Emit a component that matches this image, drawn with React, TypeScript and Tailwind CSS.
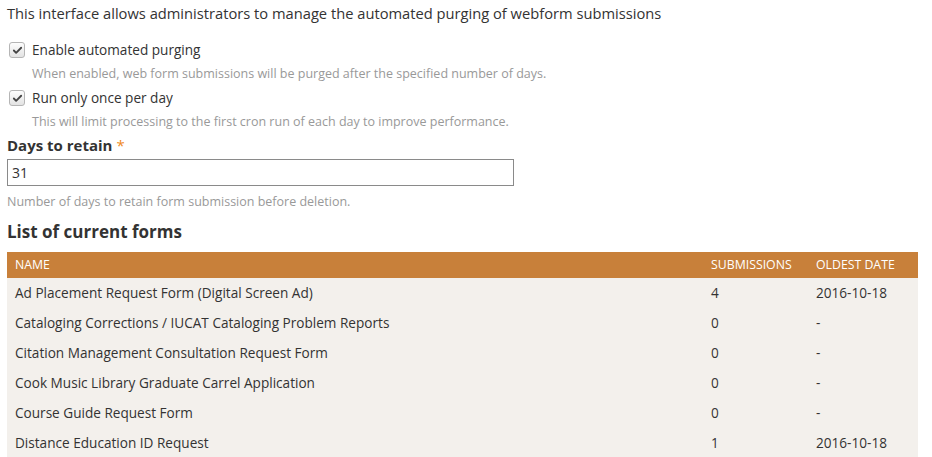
import { Check } from 'lucide-react'

const forms = [
  { name: 'Ad Placement Request Form (Digital Screen Ad)', count: 4, oldest: '2016-10-18' },
  { name: 'Cataloging Corrections / IUCAT Cataloging Problem Reports', count: 0, oldest: '-' },
  { name: 'Citation Management Consultation Request Form', count: 0, oldest: '-' },
  { name: 'Cook Music Library Graduate Carrel Application', count: 0, oldest: '-' },
  { name: 'Course Guide Request Form', count: 0, oldest: '-' },
  { name: 'Distance Education ID Request', count: 1, oldest: '2016-10-18' },
]

function CheckOption({ label, help }: { label: string; help: string }) {
  return (
    <div>
      <label className="flex items-center h-[24px]">
        <span className="ml-[9px] w-[16px] h-[16px] rounded-[3px] border border-[#b5b5b5] bg-gradient-to-b from-[#fdfdfd] to-[#e3e3e3] flex items-center justify-center">
          <Check size={11} strokeWidth={4} className="text-[#444]" />
        </span>
        <span className="ml-[7px] text-[13.6px] text-[#333]">{label}</span>
      </label>
      <div className="ml-[32px] text-[12.5px] text-[#999] h-[24px] flex items-center">{help}</div>
    </div>
  )
}

export default function App() {
  return (
    <div className="font-['Open_Sans',sans-serif] text-[#333] w-[932px] h-[457px] overflow-hidden bg-white">
      <div className="px-[7px] pt-[2px] h-[24px] flex items-center text-[14.7px]">
        This interface allows administrators to manage the automated purging of webform submissions
      </div>
      <div className="mt-[14px]">
        <CheckOption
          label="Enable automated purging"
          help="When enabled, web form submissions will be purged after the specified number of days."
        />
        <CheckOption
          label="Run only once per day"
          help="This will limit processing to the first cron run of each day to improve performance."
        />
      </div>
      <div className="px-[7px]">
        <div className="text-[15px] font-bold h-[22px] flex items-center">
          Days to retain<span className="ml-[4px] text-[#f08a24] font-normal">*</span>
        </div>
        <input
          readOnly
          value="31"
          className="mt-[3px] block w-[507px] h-[27px] border border-[#8a8a8a] px-[4px] text-[14px] text-[#333] outline-none"
        />
        <div className="text-[12.5px] text-[#999] h-[32px] pt-[1px] flex items-center">
          Number of days to retain form submission before deletion.
        </div>
        <div className="text-[17px] font-bold h-[28px] flex items-center">List of current forms</div>
        <table className="mt-[6px] w-[911px] border-collapse text-[13.6px]">
          <thead>
            <tr className="bg-[#c8803a] text-white text-[12.3px] h-[26px]">
              <th className="text-left font-normal px-[8px] uppercase">Name</th>
              <th className="text-left font-normal px-[8px] w-[105px] uppercase">Submissions</th>
              <th className="text-left font-normal px-[8px] w-[110px] uppercase">Oldest Date</th>
            </tr>
          </thead>
          <tbody className="bg-[#f3f0ec]">
            {forms.map(f => (
              <tr key={f.name} className="h-[30px]">
                <td className="px-[8px]">{f.name}</td>
                <td className="px-[8px]">{f.count}</td>
                <td className="px-[8px]">{f.oldest}</td>
              </tr>
            ))}
          </tbody>
        </table>
      </div>
    </div>
  )
}
